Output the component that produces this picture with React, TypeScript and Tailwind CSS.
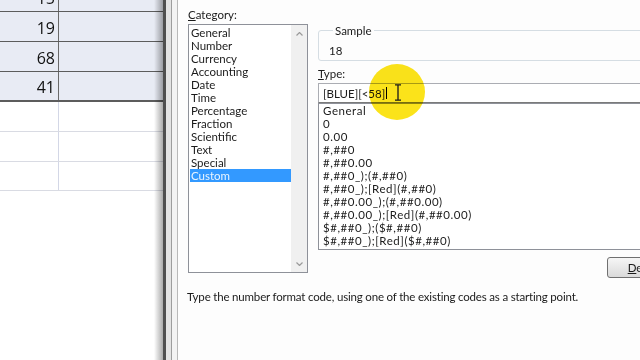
const categories = ["General", "Number", "Currency", "Accounting", "Date", "Time", "Percentage", "Fraction", "Scientific", "Text", "Special", "Custom"]

const formats = [
    "General",
    "0",
    "0.00",
    "#,##0",
    "#,##0.00",
    "#,##0_);(#,##0)",
    "#,##0_);[Red](#,##0)",
    "#,##0.00_);(#,##0.00)",
    "#,##0.00_);[Red](#,##0.00)",
    "$#,##0_);($#,##0)",
    "$#,##0_);[Red]($#,##0)",
]

const selected = [15, 19, 68, 41]

function Sheet() {
    return (
        <div className="relative w-[163px] h-full shrink-0 overflow-hidden bg-white font-['Open_Sans',sans-serif] text-[16px] text-[#111]">
            <div className="-mt-[18px]">
                {selected.map((n, i) => (
                    <div key={i} className={`flex h-[30px] bg-[#e8ebf4] ${i == selected.length - 1 ? "border-b-2" : "border-b"} border-[#5c5c5c]`}>
                        <div className="w-[59px] border-r border-[#6a6a6a] flex items-end justify-end pr-[3px] pb-[1px] leading-[24px]">{n}</div>
                        <div className="flex-1"></div>
                    </div>
                ))}
                {[0, 1, 2].map((i) => (
                    <div key={i} className={`flex ${i == 2 ? "h-[29px]" : "h-[30px]"} border-b border-[#d9dbe3]`}>
                        <div className="w-[59px] border-r border-[#d3d7e6]"></div>
                        <div className="flex-1"></div>
                    </div>
                ))}
            </div>
            {/* window shadow falling on the sheet */}
            <div className="absolute right-0 top-0 h-full w-[9px] bg-gradient-to-r from-transparent to-[#00000055]"></div>
        </div>
    )
}

function Frame() {
    return (
        <div className="flex h-full shrink-0">
            <div className="w-[3px] bg-[#4f4f4f]"></div>
            <div className="w-[5px] bg-[#e3e3e3]"></div>
            <div className="w-[1px] bg-[#9d9d9d]"></div>
            <div className="w-[5px] bg-[#f3f3f3]"></div>
            <div className="w-[1px] bg-[#b9b9b9]"></div>
        </div>
    )
}

export default function App() {
    return (
        <div className="w-[640px] h-[360px] flex overflow-hidden bg-white">
            <Sheet />
            <Frame />
            <div className="relative flex-1 bg-[#fdfdfd] pl-[10px] font-['Lato',sans-serif] text-[11.5px] leading-[13px] text-[#1b1b1b]">
                <div className="flex items-start gap-[10px]">
                    <div className="w-[120px] shrink-0 pt-[8px]">
                        <p><span className="underline">C</span>ategory:</p>
                        <div className="mt-[3px] h-[249px] flex border border-[#8e9199] bg-white">
                            <ul className="flex-1 pl-[1px] pt-[1px]">
                                {categories.map((c) => (
                                    <li key={c} className={`pl-[1px] ${c == "Custom" ? "bg-[#3399ff] text-[#eaf5ff]" : ""}`}>{c}</li>
                                ))}
                            </ul>
                            <div className="w-[16px] bg-[#f0f0f0] flex flex-col items-center justify-between pt-[7px] pb-[6px]">
                                <svg width="7" height="4" viewBox="0 0 7 4"><path d="M0.5 3.5 L3.5 0.5 L6.5 3.5" fill="none" stroke="#9a9a9a" strokeWidth="1.2" /></svg>
                                <svg width="7" height="4" viewBox="0 0 7 4"><path d="M0.5 0.5 L3.5 3.5 L6.5 0.5" fill="none" stroke="#9a9a9a" strokeWidth="1.2" /></svg>
                            </div>
                        </div>
                    </div>
                    <div className="w-[364px] shrink-0 pt-[24px]">
                        <fieldset className="border border-[#d5dde3] rounded-[3px] pl-[10px] pt-[7px] pb-[3px]">
                            <legend className="ml-[4px] px-[2px]">Sample</legend>
                            <p>18</p>
                        </fieldset>
                        <p className="mt-[6px]"><span className="underline">T</span>ype:</p>
                        <div className="mt-[3px] h-[20px] flex items-center border border-[#abadb3] border-b-[#7a7a7a] bg-white pl-[4px]">
                            <span>[BLUE][&lt;58]</span>
                            <span className="ml-[1px] w-[1px] h-[12px] bg-black"></span>
                        </div>
                        <ul className="h-[147px] border border-[#8e9199] bg-white pl-[4px] tracking-[0.55px]">
                            {formats.map((f) => (
                                <li key={f}>{f}</li>
                            ))}
                        </ul>
                        <div className="flex justify-end mt-[7px]">
                            <button className="w-[75px] h-[21px] rounded-[3px] border border-[#707070] bg-gradient-to-b from-[#f6f6f6] to-[#dadada]"><span className="underline">D</span>elete</button>
                        </div>
                    </div>
                </div>
                <p className="mt-[12px] -ml-[1px] tracking-[-0.18px]">Type the number format code, using one of the existing codes as a starting point.</p>

                {/* cursor highlight and I-beam */}
                <div className="absolute left-[191px] top-[64px] w-[56px] h-[56px] rounded-full bg-[#fbe31a] mix-blend-multiply"></div>
                <svg className="absolute left-[216px] top-[84px]" width="8" height="17" viewBox="0 0 8 17">
                    <path d="M1 0.8 H7 M4 0.8 V16.2 M1 16.2 H7" fill="none" stroke="#1a1a1a" strokeWidth="1.3" />
                </svg>
            </div>
        </div>
    )
}
